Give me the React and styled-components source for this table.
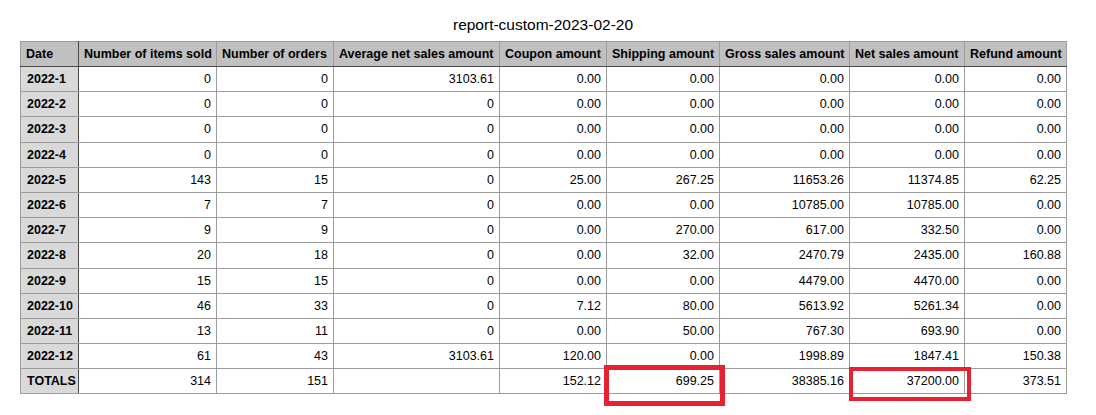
import React from 'react';
import styled, { createGlobalStyle } from 'styled-components';

const GlobalStyle = createGlobalStyle`
  html, body {
    margin: 0;
    padding: 0;
    background: #ffffff;
  }
  body {
    font-family: "Liberation Sans", Arial, Helvetica, sans-serif;
    color: #000;
  }
`;

const Page = styled.div`
  width: 1096px;
  height: 415px;
  padding: 0 0 0 20px;
  box-sizing: border-box;
  overflow: hidden;
`;

const Sheet = styled.div`
  display: flex;
  flex-direction: column;
  width: 1046px;
`;

const Title = styled.div`
  height: 41px;
  display: flex;
  align-items: flex-end;
  justify-content: center;
  padding-bottom: 7px;
  box-sizing: border-box;
  font-size: 15.5px;
  line-height: 18px;
`;

const Grid = styled.table`
  border-collapse: collapse;
  table-layout: fixed;
  width: 1046px;
  font-size: 12.5px;
`;

const HeadCell = styled.th`
  background: #c0c0c0;
  border: 1px solid #9c9c9c;
  border-bottom: 1px solid #4a4a4a;
  ${(p) => p.$first && 'border-right: 1px solid #4a4a4a;'}
  height: 24px;
  padding: 0 5px;
  text-align: left;
  font-weight: bold;
  white-space: nowrap;
  overflow: hidden;
`;

const Row = styled.tr`
  height: 25.2px;
`;

const DateCell = styled.td`
  background: #d9d9d9;
  border: 1px solid #9c9c9c;
  border-right: 1px solid #4a4a4a;
  padding: 0 6px;
  font-weight: bold;
  text-align: left;
  white-space: nowrap;
`;

const NumCell = styled.td`
  position: relative;
  border: 1px solid #9c9c9c;
  padding: 0 5px;
  text-align: right;
  white-space: nowrap;
`;

const Highlight = styled.span`
  position: absolute;
  left: ${(p) => p.$l}px;
  right: ${(p) => p.$r}px;
  top: ${(p) => p.$t}px;
  bottom: ${(p) => p.$b}px;
  border: ${(p) => p.$w}px solid #e62230;
  pointer-events: none;
`;

const columns = [
  { label: 'Date', width: 58 },
  { label: 'Number of items sold', width: 138 },
  { label: 'Number of orders', width: 117 },
  { label: 'Average net sales amount', width: 166 },
  { label: 'Coupon amount', width: 107 },
  { label: 'Shipping amount', width: 113 },
  { label: 'Gross sales amount', width: 130 },
  { label: 'Net sales amount', width: 115 },
  { label: 'Refund amount', width: 102 },
];

const rows = [
  ['2022-1', '0', '0', '3103.61', '0.00', '0.00', '0.00', '0.00', '0.00'],
  ['2022-2', '0', '0', '0', '0.00', '0.00', '0.00', '0.00', '0.00'],
  ['2022-3', '0', '0', '0', '0.00', '0.00', '0.00', '0.00', '0.00'],
  ['2022-4', '0', '0', '0', '0.00', '0.00', '0.00', '0.00', '0.00'],
  ['2022-5', '143', '15', '0', '25.00', '267.25', '11653.26', '11374.85', '62.25'],
  ['2022-6', '7', '7', '0', '0.00', '0.00', '10785.00', '10785.00', '0.00'],
  ['2022-7', '9', '9', '0', '0.00', '270.00', '617.00', '332.50', '0.00'],
  ['2022-8', '20', '18', '0', '0.00', '32.00', '2470.79', '2435.00', '160.88'],
  ['2022-9', '15', '15', '0', '0.00', '0.00', '4479.00', '4470.00', '0.00'],
  ['2022-10', '46', '33', '0', '7.12', '80.00', '5613.92', '5261.34', '0.00'],
  ['2022-11', '13', '11', '0', '0.00', '50.00', '767.30', '693.90', '0.00'],
  ['2022-12', '61', '43', '3103.61', '120.00', '0.00', '1998.89', '1847.41', '150.38'],
  ['TOTALS', '314', '151', '', '152.12', '699.25', '38385.16', '37200.00', '373.51'],
];

// red boxes drawn over the totals row, keyed by column index
const highlights = {
  5: { l: -3, r: -6, t: -4, b: -13, w: 5 },
  7: { l: -1, r: -7, t: -2, b: -8, w: 4 },
};

export default function App() {
  const lastRow = rows.length - 1;
  return (
    <Page>
      <GlobalStyle />
      <Sheet>
        <Title>report-custom-2023-02-20</Title>
        <Grid>
          <colgroup>
            {columns.map((c) => (
              <col key={c.label} style={{ width: c.width }} />
            ))}
          </colgroup>
          <thead>
            <tr>
              {columns.map((c, i) => (
                <HeadCell key={c.label} $first={i === 0}>
                  {c.label}
                </HeadCell>
              ))}
            </tr>
          </thead>
          <tbody>
            {rows.map((r, ri) => (
              <Row key={r[0]}>
                <DateCell>{r[0]}</DateCell>
                {r.slice(1).map((v, ci) => {
                  const hl = ri === lastRow ? highlights[ci + 1] : null;
                  return (
                    <NumCell key={ci}>
                      {v}
                      {hl && <Highlight $l={hl.l} $r={hl.r} $t={hl.t} $b={hl.b} $w={hl.w} />}
                    </NumCell>
                  );
                })}
              </Row>
            ))}
          </tbody>
        </Grid>
      </Sheet>
    </Page>
  );
}
